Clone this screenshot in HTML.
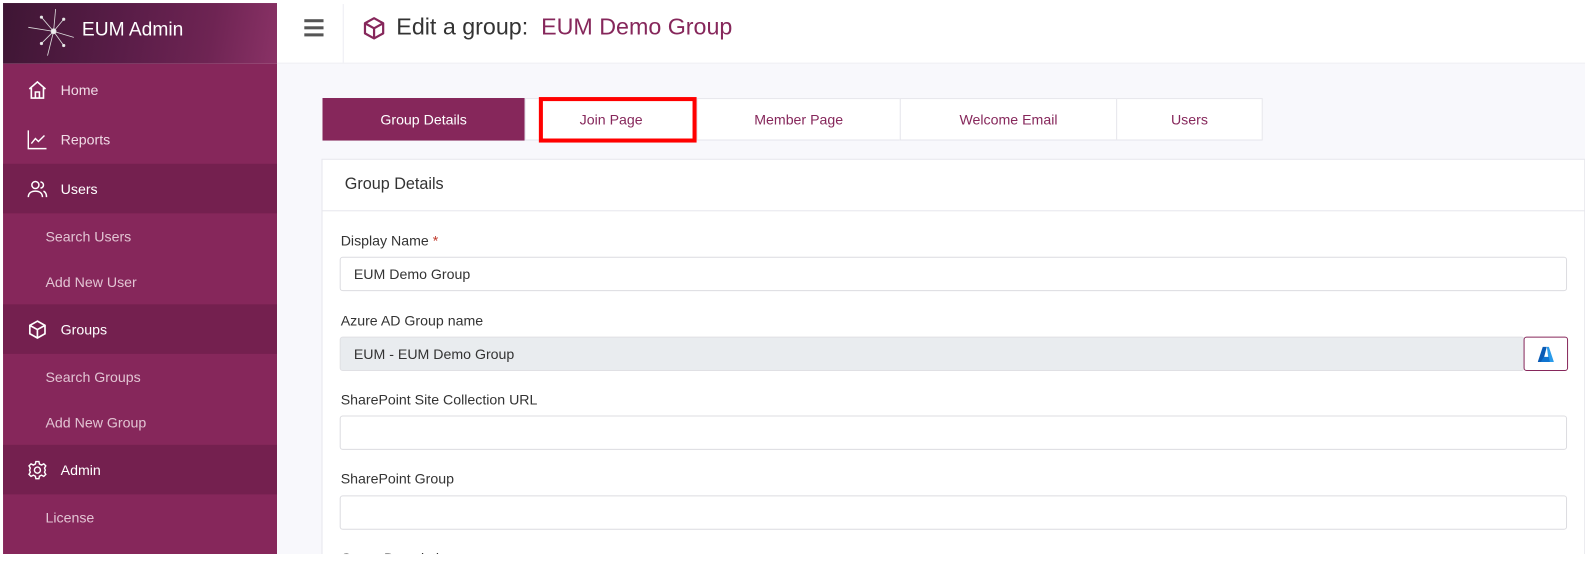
<!DOCTYPE html>
<html><head><meta charset="utf-8"><style>
*{box-sizing:border-box;margin:0;padding:0}
body{width:1585px;height:560px;background:#fff;font-family:"Liberation Sans",sans-serif;position:relative;overflow:hidden}
#w{position:absolute;left:0;top:0;width:1568px;height:554px;transform:scale(1.011);transform-origin:0 0}
.abs{position:absolute}
.side{left:3px;top:63px;width:271px;height:485px;background:#86275b}
.logo{left:3px;top:3px;width:271px;height:60px;background:linear-gradient(100deg,#3e1634 0%,#5a1d48 45%,#6e2453 75%,#8a3266 100%)}
.logo span{position:absolute;left:78px;top:16px;color:#fff;font-size:19px}
.item{position:absolute;left:0;width:271px;color:#f0dbe6;font-size:14px;display:flex;align-items:center}
.dark{background:#74204f;color:#fff}
.item svg{position:absolute;left:24px}
.item .t{position:absolute;left:57px}
.sub .t{left:42px;color:#e2c4d3}
.main{left:274px;top:63px;width:1311px;height:485px;background:#f8f8fc}
.tab{position:absolute;top:97px;height:42px;background:#fff;border:1px solid #e6e6ec;color:#86275b;font-size:14px;display:flex;align-items:center;justify-content:center}
.card{left:318px;top:157px;width:1250px;height:400px;background:#fff;border:1px solid #e6e6ec;border-right:1px solid #e6e6ec}
.lbl{position:absolute;left:337px;font-size:14px;color:#333}
.inp{position:absolute;left:336px;width:1214px;height:34px;border:1px solid #dcdce0;border-radius:3px;background:#fff;font-size:14px;color:#333;padding:8px 13px}
</style></head><body><div id="w">
<div class="abs logo"><svg class="abs" style="left:20px;top:4px" width="55" height="52"><g stroke="#ddd" stroke-width="0.8" fill="#eee"><line x1="30" y1="24" x2="5" y2="20"/><line x1="30" y1="24" x2="50" y2="30"/><line x1="30" y1="24" x2="32" y2="2"/><line x1="30" y1="24" x2="24" y2="48"/><line x1="30" y1="24" x2="18" y2="10"/><line x1="30" y1="24" x2="40" y2="12"/><line x1="30" y1="24" x2="18" y2="36"/><line x1="30" y1="24" x2="40" y2="38"/><circle cx="30" cy="24" r="2.5"/><circle cx="18" cy="10" r="1.2"/><circle cx="40" cy="12" r="1.2"/><circle cx="18" cy="36" r="1.2"/><circle cx="40" cy="38" r="1.2"/></g></svg><span>EUM Admin</span></div>
<div class="abs" style="left:274px;top:0;width:1311px;height:63px;background:#fff;border-bottom:1px solid #ececf2"></div>
<div class="abs" style="left:301px;top:19px;width:19px;height:3px;background:#555;box-shadow:0 7px 0 #555,0 14px 0 #555"></div>
<div class="abs" style="left:339px;top:4px;width:1px;height:58px;background:#ececf2"></div>
<svg class="abs" style="left:358px;top:16px" width="24" height="24" viewBox="0 0 24 24" fill="none" stroke="#86275b" stroke-width="2.2" stroke-linejoin="round"><path d="M12 2 21 7v10l-9 5-9-5V7z M3 7l9 5 9-5 M12 12v10"/></svg>
<div class="abs" style="left:392px;top:13px;font-size:23px;color:#333">Edit a group:&nbsp; <span style="color:#86275b">EUM Demo Group</span></div>
<div class="abs side">
 <div class="item" style="top:2px;height:48px"><svg width="20" height="20" viewBox="0 0 20 20" fill="none" stroke="#fff" stroke-width="1.6"><path d="M2 9 10 2l8 7M4 8v10h12V8M8 18v-6h4v6"/></svg><span class="t">Home</span></div>
 <div class="item" style="top:50px;height:49px"><svg width="20" height="20" viewBox="0 0 20 20" fill="none" stroke="#fff" stroke-width="1.4"><path d="M1 1v18h18M4 14l4-5 3 3 6-6"/></svg><span class="t">Reports</span></div>
 <div class="item dark" style="top:99px;height:49px"><svg width="20" height="20" viewBox="0 0 20 20" fill="none" stroke="#fff" stroke-width="1.5"><circle cx="8" cy="6" r="3.5"/><path d="M1 18c0-4 3-6 7-6s7 2 7 6M13 3a3 3 0 0 1 0 6M16 12c2 1 3 3 3 6"/></svg><span class="t">Users</span></div>
 <div class="item sub" style="top:148px;height:45px"><span class="t">Search Users</span></div>
 <div class="item sub" style="top:193px;height:45px"><span class="t">Add New User</span></div>
 <div class="item dark" style="top:238px;height:49px"><svg width="20" height="20" viewBox="0 0 24 24" fill="none" stroke="#fff" stroke-width="2"><path d="M12 2 21 7v10l-9 5-9-5V7z M3 7l9 5 9-5 M12 12v10"/></svg><span class="t">Groups</span></div>
 <div class="item sub" style="top:287px;height:45px"><span class="t">Search Groups</span></div>
 <div class="item sub" style="top:332px;height:45px"><span class="t">Add New Group</span></div>
 <div class="item dark" style="top:377px;height:49px"><svg width="20" height="20" viewBox="0 0 20 20" fill="none" stroke="#fff" stroke-width="1.4"><circle cx="10" cy="10" r="3"/><path d="M8.5 1.5h3l.5 2.5 2 1 2.3-1.2 2 2L17 8l.8 2-.8 2 1.3 2.2-2 2L14 15l-2 1-.5 2.5h-3L8 16l-2-1-2.3 1.2-2-2L3 12l-.8-2L3 8 1.7 5.8l2-2L6 5l2-1z"/></svg><span class="t">Admin</span></div>
 <div class="item sub" style="top:426px;height:45px"><span class="t">License</span></div>
</div>
<div class="abs main"></div>
<div class="tab" style="left:319px;width:200px;background:#86275b;color:#fff;border-color:#86275b">Group Details</div>
<div class="tab" style="left:519px;width:171px;color:#86275b">Join Page</div>
<div class="tab" style="left:689px;width:202px">Member Page</div>
<div class="tab" style="left:890px;width:215px">Welcome Email</div>
<div class="tab" style="left:1104px;width:145px">Users</div>
<div class="abs" style="left:533px;top:96px;width:156px;height:45px;border:4px solid #f00"></div>
<div class="abs card"></div>
<div class="abs" style="left:318px;top:208px;width:1250px;height:1px;background:#e6e6ec"></div>
<div class="abs" style="left:341px;top:174px;font-size:16px;color:#333">Group Details</div>
<div class="lbl" style="top:230px">Display Name <span style="color:#c0392b">*</span></div>
<div class="inp" style="top:254px">EUM Demo Group</div>
<div class="lbl" style="top:309px">Azure AD Group name</div>
<div class="inp" style="top:333px;width:1172px;background:#e9ecef;border-color:#e0e0e4">EUM - EUM Demo Group</div>
<div class="abs" style="left:1507px;top:333px;width:44px;height:34px;border:1px solid #86275b;border-radius:3px;background:#fff"><svg class="abs" style="left:13px;top:9px" width="16" height="15" viewBox="0 0 16 15"><path d="M5 0h4L5 15H0z" fill="#0a5bb5"/><path d="M9 0h2l5 15h-5z" fill="#2a9bea"/><path d="M6 10h5l1 5H3z" fill="#0f74d0"/></svg></div>
<div class="lbl" style="top:387px">SharePoint Site Collection URL</div>
<div class="inp" style="top:411px"></div>
<div class="lbl" style="top:465px">SharePoint Group</div>
<div class="inp" style="top:490px"></div>
<div class="lbl" style="top:544px">Group Description</div>
<div class="abs" style="left:0;top:548px;width:1585px;height:12px;background:#fff"></div>
</div></body></html>
